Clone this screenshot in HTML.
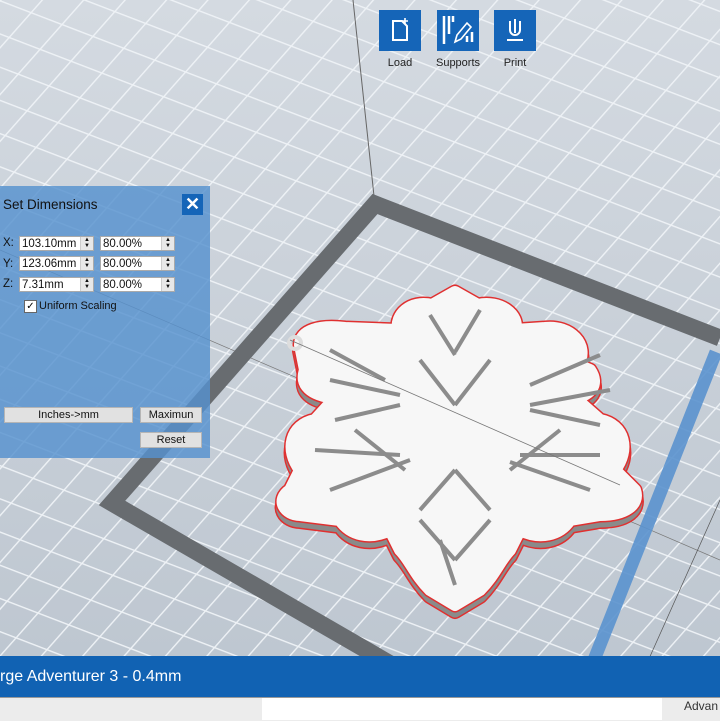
<!DOCTYPE html>
<html><head><meta charset="utf-8"><style>
body{margin:0;width:720px;height:720px;overflow:hidden;position:relative;font-family:"Liberation Sans",sans-serif;background:#c6ced6}
svg{position:absolute;left:0;top:0}
.tb{position:absolute;top:10px;width:42px;height:41px;background:#1565b8}
.tl{position:absolute;top:57px;font-size:11px;color:#222;width:70px;text-align:center}
#dlg{position:absolute;left:0;top:186px;width:210px;height:272px;background:rgba(86,145,206,0.82)}
.inp{position:absolute;height:15px;background:#fff;border:1px solid #aaa;font-size:11.5px;line-height:15px;padding-left:2px;box-sizing:border-box;color:#111}
.spin{position:absolute;right:0;top:0;width:12px;height:13px;background:#e8e8e8;border-left:1px solid #ccc;font-size:6px;line-height:6px;text-align:center}
.lab{position:absolute;left:3px;font-size:11.5px;color:#111}
.btn{position:absolute;height:16px;background:#e1e1e1;border:1px solid #b5b5b5;box-sizing:border-box;font-size:11px;text-align:center;line-height:14px;color:#111}
</style></head><body>
<svg width="720" height="720">
<defs>
<pattern id="p1" width="31" height="31" patternUnits="userSpaceOnUse" patternTransform="rotate(41.5)"><rect x="0" y="0" width="1.4" height="31" fill="#eef2f6"/></pattern>
<pattern id="p2" width="31" height="31" patternUnits="userSpaceOnUse" patternTransform="rotate(21)"><rect x="0" y="0" width="31" height="1.4" fill="#eef2f6"/></pattern>
<linearGradient id="bg" x1="0" y1="0" x2="0" y2="1"><stop offset="0" stop-color="#d4dae1"/><stop offset="1" stop-color="#bcc5cf"/></linearGradient>
<path id="sf" d="M455,292 L478,305 C500,300 520,315 515,330 L545,328 C570,325 590,345 578,365 L590,370 C600,385 590,395 575,398 L600,420 C625,425 630,450 615,470 L635,490 C640,505 625,515 600,515 L570,520 C560,535 540,540 520,530 L510,550 C500,560 495,575 480,590 L455,605 L430,590 C415,575 410,560 400,550 L390,530 C370,540 350,535 340,520 L300,515 C285,515 275,500 290,490 L300,470 C285,450 290,425 315,420 L335,398 C310,395 300,385 305,370 L300,345 C300,330 320,325 345,328 L398,330 C395,315 410,300 432,305 Z"/>
</defs>
<rect width="720" height="720" fill="url(#bg)"/>
<rect width="720" height="720" fill="url(#p1)"/>
<rect width="720" height="720" fill="url(#p2)"/>
<line x1="353" y1="0" x2="374" y2="196" stroke="#666" stroke-width="1"/>
<line x1="0" y1="250" x2="720" y2="560" stroke="#777" stroke-width="0.7"/>
<polyline points="720,338 375,204 112,503 470,710" fill="none" stroke="#686c70" stroke-width="17" stroke-linejoin="miter"/>
<line x1="716" y1="352" x2="594" y2="660" stroke="#5b93cf" stroke-width="13" opacity="0.9"/>
<line x1="720" y1="500" x2="635" y2="690" stroke="#555" stroke-width="0.7"/>
<use href="#sf" transform="translate(0,6)" fill="#8a8a8a" stroke="#e03030" stroke-width="16" stroke-linejoin="round"/>
<use href="#sf" transform="translate(0,6)" fill="#8a8a8a" stroke="#8a8a8a" stroke-width="13" stroke-linejoin="round"/>
<use href="#sf" fill="#f7f7f7" stroke="#e03030" stroke-width="15" stroke-linejoin="round"/>
<use href="#sf" fill="#f7f7f7" stroke="#f7f7f7" stroke-width="12" stroke-linejoin="round"/>
<circle cx="295" cy="343" r="6" fill="none" stroke="#ddd" stroke-width="4"/>
<g stroke="#8c8c8c" stroke-width="4" fill="none">
<path d="M430,315 L455,355 M480,310 L455,352 M420,360 L455,405 M490,360 L455,405"/>
<path d="M330,350 L385,380 M330,380 L400,395 M335,420 L400,405 M600,355 L530,385 M610,390 L530,405 M600,425 L530,410"/>
<path d="M315,450 L400,455 M330,490 L410,460 M600,455 L520,455 M590,490 L510,462"/>
<path d="M455,470 L420,510 M455,470 L490,510 M420,520 L455,560 M490,520 L455,560 M440,540 L455,585"/>
<path d="M355,430 L405,470 M560,430 L510,470"/>
</g>
<line x1="290" y1="340" x2="620" y2="485" stroke="#777" stroke-width="0.8"/>
</svg>
<div class="tb" style="left:379px"><svg width="42" height="41"><path d="M14,11 h9 l5,5 v14 h-14 z" fill="none" stroke="#fff" stroke-width="2"/><path d="M26,8 v6 M23,11 h6" stroke="#fff" stroke-width="1.6"/></svg></div>
<div class="tb" style="left:437px"><svg width="42" height="41"><path d="M7,6 v28 M12,6 v18 M16,6 v6 M30,26 v6 M35,22 v10" stroke="#fff" stroke-width="2.5"/><path d="M18,32 l2,-7 l10,-12 l4,4 l-10,12 z" fill="none" stroke="#fff" stroke-width="1.6"/></svg></div>
<div class="tb" style="left:494px"><svg width="42" height="41"><path d="M16,11 v9 a5,5 0 0 0 10,0 v-9 M21,9 v14 M13,30 h16" fill="none" stroke="#fff" stroke-width="2"/></svg></div>
<div class="tl" style="left:365px">Load</div>
<div class="tl" style="left:423px">Supports</div>
<div class="tl" style="left:480px">Print</div>
<div id="dlg">
<div style="position:absolute;left:3px;top:11px;font-size:13.5px;color:#111">Set Dimensions</div>
<div style="position:absolute;left:182px;top:8px;width:21px;height:21px;background:#1565b8;color:#fff;font-size:18px;line-height:21px;text-align:center;font-weight:bold">✕</div>
<div class="lab" style="top:51px">X:</div><div class="lab" style="top:72px">Y:</div><div class="lab" style="top:92px">Z:</div>
<div class="inp" style="left:19px;top:50px;width:75px">103.10mm<div class="spin">▲<br>▼</div></div>
<div class="inp" style="left:100px;top:50px;width:75px">80.00%<div class="spin">▲<br>▼</div></div>
<div class="inp" style="left:19px;top:70px;width:75px">123.06mm<div class="spin">▲<br>▼</div></div>
<div class="inp" style="left:100px;top:70px;width:75px">80.00%<div class="spin">▲<br>▼</div></div>
<div class="inp" style="left:19px;top:91px;width:75px">7.31mm<div class="spin">▲<br>▼</div></div>
<div class="inp" style="left:100px;top:91px;width:75px">80.00%<div class="spin">▲<br>▼</div></div>
<div style="position:absolute;left:24px;top:114px;width:11px;height:11px;background:#fff;border:1px solid #666;font-size:10px;line-height:11px;text-align:center">✓</div>
<div style="position:absolute;left:39px;top:114px;font-size:11px;color:#111">Uniform Scaling</div>
<div class="btn" style="left:4px;top:221px;width:129px">Inches-&gt;mm</div>
<div class="btn" style="left:140px;top:221px;width:62px">Maximun</div>
<div class="btn" style="left:140px;top:246px;width:62px">Reset</div>
</div>
<div style="position:absolute;left:0;top:656px;width:720px;height:41px;background:#1162b3;color:#fff;font-size:16px;line-height:41px">rge Adventurer 3 - 0.4mm</div>
<div style="position:absolute;left:0;top:697px;width:720px;height:23px;background:#ececec;border-top:1px solid #999"></div>
<div style="position:absolute;left:262px;top:698px;width:400px;height:22px;background:#fff"></div>
<div style="position:absolute;left:684px;top:699px;font-size:12px;color:#333">Advan</div>
</body></html>
